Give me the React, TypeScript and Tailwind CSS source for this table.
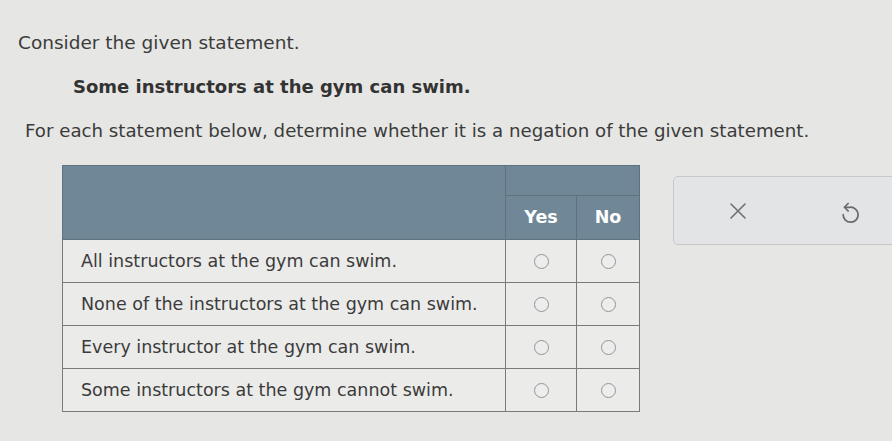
import React from "react";

const rows = [
  "All instructors at the gym can swim.",
  "None of the instructors at the gym can swim.",
  "Every instructor at the gym can swim.",
  "Some instructors at the gym cannot swim.",
];

function Radio() {
  return <span className="inline-block w-[15px] h-[15px] rounded-full border-[1.5px] border-[#959595] bg-[#ededed]" />;
}

export default function App() {
  return (
    <div
      className="w-[892px] h-[441px] overflow-hidden bg-[#e6e6e4] text-[#3b3b3b]"
      style={{ fontFamily: '"DejaVu Sans", Verdana, sans-serif' }}
    >
      <div className="pt-[30px]">
        <p className="pl-[18px] text-[18.5px] leading-[25px]">Consider the given statement.</p>
        <p className="pl-[73px] mt-[19px] text-[18px] leading-[25px] font-bold text-[#333]">
          Some instructors at the gym can swim.
        </p>
        <p className="pl-[25px] mt-[19px] text-[18.2px] leading-[25px]">
          For each statement below, determine whether it is a negation of the given statement.
        </p>
        <div className="flex items-start mt-[22px]">
          <table className="ml-[62px] border-collapse table-fixed w-[577px] text-[17.5px]">
            <colgroup>
              <col className="w-[443px]" />
              <col className="w-[71px]" />
              <col className="w-[63px]" />
            </colgroup>
            <thead>
              <tr className="h-[30px]">
                <th rowSpan={2} className="bg-[#6f8796] border border-[#5e7280]" />
                <th colSpan={2} className="bg-[#6f8796] border border-[#5e7280]" />
              </tr>
              <tr className="h-[44px]">
                <th className="bg-[#6f8796] border border-[#5e7280] text-white font-bold">Yes</th>
                <th className="bg-[#6f8796] border border-[#5e7280] text-white font-bold">No</th>
              </tr>
            </thead>
            <tbody>
              {rows.map((r) => (
                <tr key={r} className="h-[43px] bg-[#ebebea]">
                  <td className="border border-[#7a7a7a] pl-[18px] text-[#3b3b3b] whitespace-nowrap">{r}</td>
                  <td className="border border-[#7a7a7a] align-middle">
                    <div className="flex justify-center"><Radio /></div>
                  </td>
                  <td className="border border-[#7a7a7a] align-middle">
                    <div className="flex justify-center"><Radio /></div>
                  </td>
                </tr>
              ))}
            </tbody>
          </table>
          <div className="ml-[33px] mt-[11px] w-[240px] h-[69px] shrink-0 rounded-[5px] border border-[#c8c8c8] bg-[#e3e4e6] flex items-center">
            <div className="w-[128px] flex justify-center">
              <svg width="20" height="20" viewBox="0 0 20 20" fill="none" stroke="#707070" strokeWidth="1.6" strokeLinecap="round">
                <path d="M3 3L17 17M17 3L3 17" />
              </svg>
            </div>
            <div className="w-[96px] flex justify-center">
              <svg width="30" height="30" viewBox="0 0 24 24" fill="none" stroke="#6a6a6a" strokeWidth="1.4" strokeLinecap="round" strokeLinejoin="round">
                <path d="M6.5 15 A6 6 0 1 0 12 9 H8" />
                <path d="M10.5 6 L7.5 9 L10.5 12" />
              </svg>
            </div>
          </div>
        </div>
      </div>
    </div>
  );
}
